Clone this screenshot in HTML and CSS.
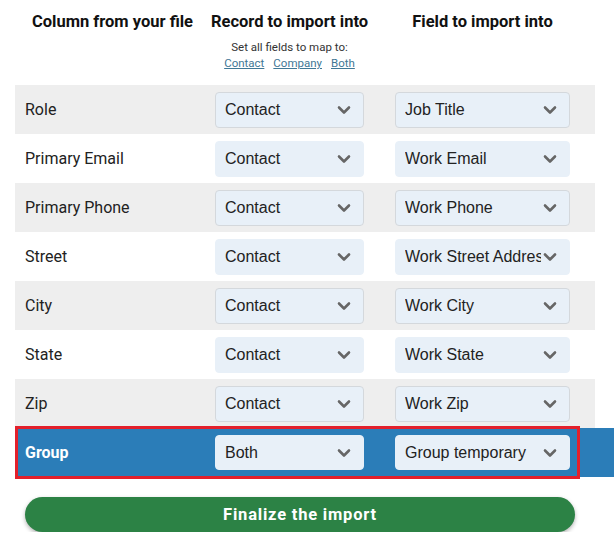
FILE: index.html
```html
<!DOCTYPE html>
<html>
<head>
<meta charset="utf-8">
<link rel="stylesheet" href="styles.css">
</head>
<body>
<div class="page">
  <div class="head">
    <div class="h h1">Column from your file</div>
    <div class="h h2">
      <div class="htitle">Record to import into</div>
      <div class="setall">Set all fields to map to:</div>
      <div class="links"><a href="#">Contact</a><a href="#">Company</a><a href="#">Both</a></div>
    </div>
    <div class="h h3">Field to import into</div>
  </div>

  <div class="rows">
    <div class="row gray">
      <div class="label">Role</div>
      <div class="sel rec"><span>Contact</span><svg class="chev" viewBox="0 0 14 10"><path d="M2 2.5 L7 7.5 L12 2.5"/></svg></div>
      <div class="sel fld"><span>Job Title</span><svg class="chev" viewBox="0 0 14 10"><path d="M2 2.5 L7 7.5 L12 2.5"/></svg></div>
    </div>
    <div class="row white">
      <div class="label">Primary Email</div>
      <div class="sel rec"><span>Contact</span><svg class="chev" viewBox="0 0 14 10"><path d="M2 2.5 L7 7.5 L12 2.5"/></svg></div>
      <div class="sel fld"><span>Work Email</span><svg class="chev" viewBox="0 0 14 10"><path d="M2 2.5 L7 7.5 L12 2.5"/></svg></div>
    </div>
    <div class="row gray">
      <div class="label">Primary Phone</div>
      <div class="sel rec"><span>Contact</span><svg class="chev" viewBox="0 0 14 10"><path d="M2 2.5 L7 7.5 L12 2.5"/></svg></div>
      <div class="sel fld"><span>Work Phone</span><svg class="chev" viewBox="0 0 14 10"><path d="M2 2.5 L7 7.5 L12 2.5"/></svg></div>
    </div>
    <div class="row white">
      <div class="label">Street</div>
      <div class="sel rec"><span>Contact</span><svg class="chev" viewBox="0 0 14 10"><path d="M2 2.5 L7 7.5 L12 2.5"/></svg></div>
      <div class="sel fld"><span>Work Street Address</span><svg class="chev" viewBox="0 0 14 10"><path d="M2 2.5 L7 7.5 L12 2.5"/></svg></div>
    </div>
    <div class="row gray">
      <div class="label">City</div>
      <div class="sel rec"><span>Contact</span><svg class="chev" viewBox="0 0 14 10"><path d="M2 2.5 L7 7.5 L12 2.5"/></svg></div>
      <div class="sel fld"><span>Work City</span><svg class="chev" viewBox="0 0 14 10"><path d="M2 2.5 L7 7.5 L12 2.5"/></svg></div>
    </div>
    <div class="row white">
      <div class="label">State</div>
      <div class="sel rec"><span>Contact</span><svg class="chev" viewBox="0 0 14 10"><path d="M2 2.5 L7 7.5 L12 2.5"/></svg></div>
      <div class="sel fld"><span>Work State</span><svg class="chev" viewBox="0 0 14 10"><path d="M2 2.5 L7 7.5 L12 2.5"/></svg></div>
    </div>
    <div class="row gray">
      <div class="label">Zip</div>
      <div class="sel rec"><span>Contact</span><svg class="chev" viewBox="0 0 14 10"><path d="M2 2.5 L7 7.5 L12 2.5"/></svg></div>
      <div class="sel fld"><span>Work Zip</span><svg class="chev" viewBox="0 0 14 10"><path d="M2 2.5 L7 7.5 L12 2.5"/></svg></div>
    </div>
    <div class="row group">
      <div class="label">Group</div>
      <div class="sel rec"><span>Both</span><svg class="chev" viewBox="0 0 14 10"><path d="M2 2.5 L7 7.5 L12 2.5"/></svg></div>
      <div class="sel fld"><span>Group temporary</span><svg class="chev" viewBox="0 0 14 10"><path d="M2 2.5 L7 7.5 L12 2.5"/></svg></div>
      <div class="highlight"></div>
    </div>
  </div>

  <button class="finalize">Finalize the import</button>
</div>
</body>
</html>
```

FILE: styles.css
```css
html, body {
  margin: 0;
  padding: 0;
  background: #fff;
  overflow: hidden;
}
body {
  font-family: Roboto, "Liberation Sans", Arial, sans-serif;
  color: #222;
}
.page {
  padding: 12px 0 0 15px;
  width: 580px;
}
.head {
  display: flex;
  height: 73px;
}
.h {
  font-weight: 700;
  font-size: 16.5px;
  line-height: 20px;
  text-align: center;
  color: #111;
  white-space: nowrap;
}
.h1 {
  width: 195px;
}
.h2 {
  margin-left: 5px;
  width: 149px;
  display: flex;
  flex-direction: column;
  align-items: center;
}
.h3 {
  margin-left: 31px;
  width: 175px;
}
.setall {
  font-weight: 400;
  font-size: 11.5px;
  line-height: 13px;
  color: #333;
  margin-top: 9px;
}
.links {
  display: flex;
  gap: 9px;
  font-weight: 400;
  font-size: 11.5px;
  line-height: 13px;
  margin-top: 3px;
}
.links a {
  color: #3f7896;
  text-decoration: underline;
}
.rows {
  display: flex;
  flex-direction: column;
}
.row {
  position: relative;
  display: flex;
  align-items: center;
  height: 49px;
  box-sizing: border-box;
}
.row.gray {
  background: #eeeeee;
}
.row.white {
  background: #fff;
}
.row.group {
  background: #2b7db8;
  margin-right: -19px;
}
.label {
  width: 190px;
  padding-left: 10px;
  font-size: 16px;
  color: #222;
}
.group .label {
  color: #fff;
  font-weight: 700;
}
.sel {
  box-sizing: border-box;
  height: 36px;
  border-radius: 4px;
  background: #e8f0f8;
  border: 1px solid #e8f0f8;
  display: flex;
  align-items: center;
  padding-left: 9px;
  padding-right: 12px;
  font-family: "Liberation Sans", Arial, sans-serif;
  font-size: 16px;
  color: #222;
  overflow: hidden;
  white-space: nowrap;
}
.gray .sel {
  border-color: #d4d8dc;
}
.group .sel {
  height: 35px;
}
.sel span {
  flex: 1;
  overflow: hidden;
  min-width: 0;
}
.sel.rec {
  width: 149px;
}
.sel.fld {
  width: 175px;
  margin-left: 31px;
}
.chev {
  width: 14px;
  height: 10px;
  flex: none;
  margin-left: 2px;
}
.chev path {
  fill: none;
  stroke: #666;
  stroke-width: 2.6;
  stroke-linecap: round;
  stroke-linejoin: round;
}
.highlight {
  position: absolute;
  left: 0;
  top: -2px;
  width: 565px;
  bottom: -2px;
  border: 3px solid #e3202b;
  box-sizing: border-box;
  pointer-events: none;
}
.finalize {
  display: block;
  margin: 20px 0 0 10px;
  width: 550px;
  height: 35px;
  border: none;
  border-radius: 18px;
  background: #2c8245;
  color: #fff;
  font-family: Roboto, "Liberation Sans", Arial, sans-serif;
  font-weight: 700;
  font-size: 16.5px;
  letter-spacing: 0.8px;
  box-shadow: 0 2px 4px rgba(0,0,0,0.3);
}
```
